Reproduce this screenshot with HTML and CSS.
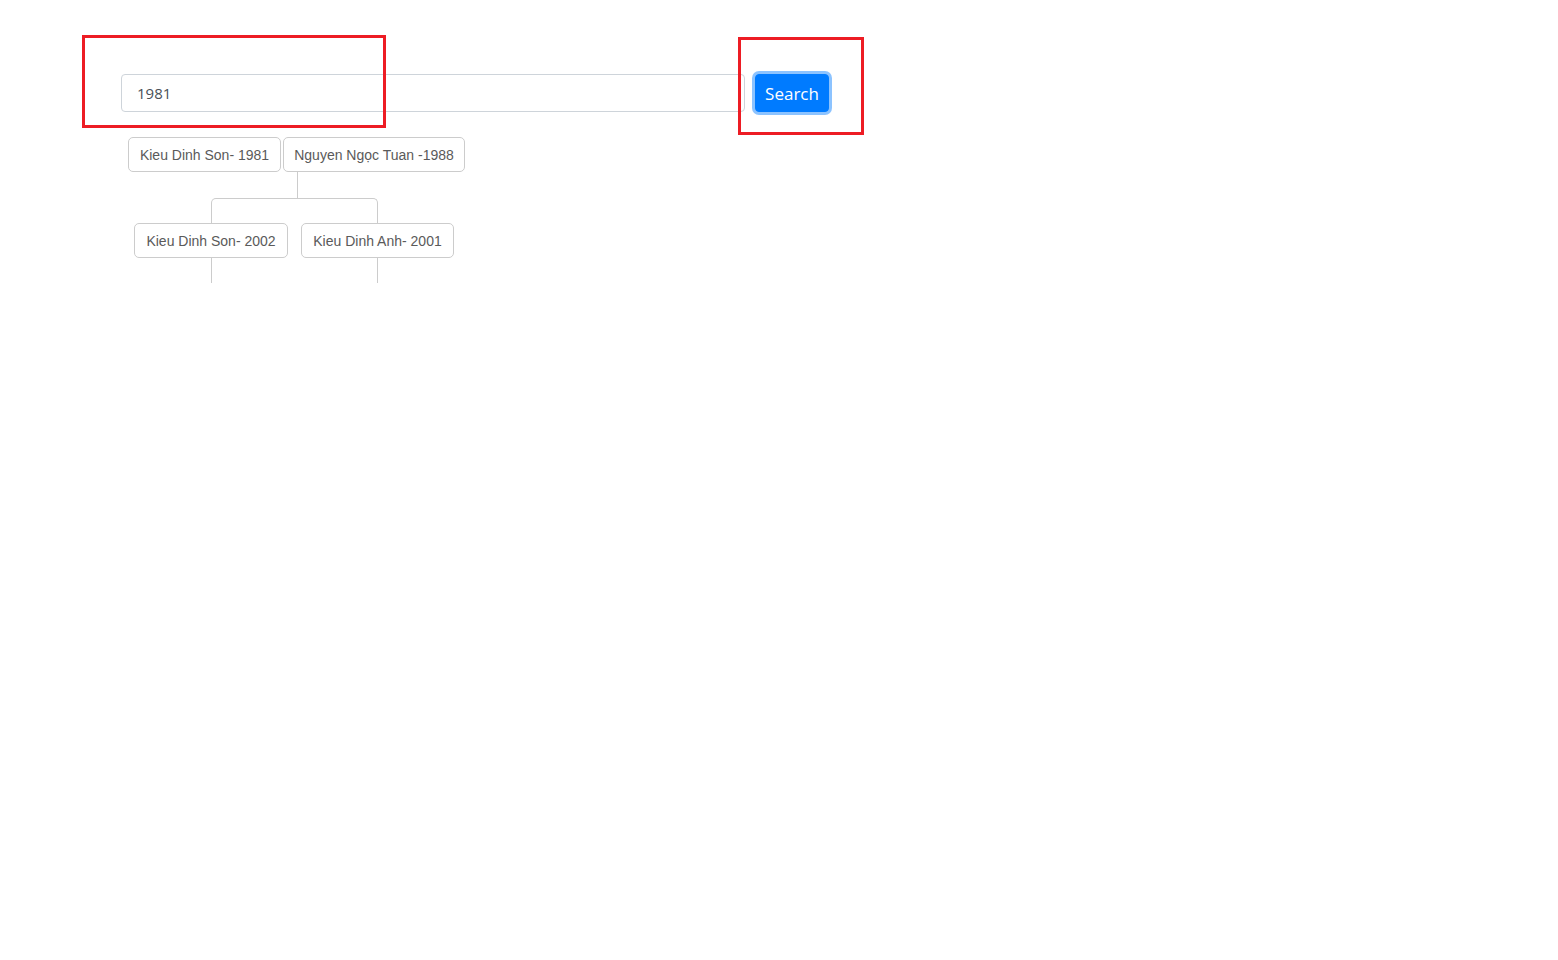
FILE: index.html
```
<!DOCTYPE html>
<html lang="vi">
<head>
<meta charset="utf-8">
<title>Family Tree Search</title>
<link rel="stylesheet" href="styles.css">
</head>
<body>
<div class="page">
  <form class="search-row">
    <input class="search-input" type="text" value="1981">
    <button class="search-btn" type="button">Search</button>
  </form>

  <div class="tree">
    <div class="couple">
      <div class="node node-a">Kieu Dinh Son- 1981</div>
      <div class="node node-b">Nguyen Ngọc Tuan -1988</div>
    </div>
    <div class="stem"></div>
    <div class="branch"></div>
    <div class="children">
      <div class="child">
        <div class="node node-c">Kieu Dinh Son- 2002</div>
        <div class="leg"></div>
      </div>
      <div class="child">
        <div class="node node-d">Kieu Dinh Anh- 2001</div>
        <div class="leg"></div>
      </div>
    </div>
  </div>
</div>

<div class="mark mark-input"></div>
<div class="mark mark-button"></div>
</body>
</html>
```

FILE: styles.css
```
html, body {
  margin: 0;
  padding: 0;
  background: #ffffff;
}

body {
  position: relative;
  min-height: 960px;
  font-family: "Open Sans", "Noto Sans", "Liberation Sans", sans-serif;
}

.page {
  padding: 74px 0 0 121px;
}

.search-row {
  display: flex;
  align-items: center;
  gap: 10px;
  margin: 0;
}

.search-input {
  box-sizing: border-box;
  width: 624px;
  height: 38px;
  padding: 0 15px;
  border: 1px solid #ced4da;
  border-radius: 4px;
  font-family: "Open Sans", "Noto Sans", sans-serif;
  font-size: 15px;
  color: #495057;
  background: #ffffff;
  outline: none;
}

.search-btn {
  box-sizing: border-box;
  width: 74px;
  height: 38px;
  padding: 0;
  border: 1px solid #007bff;
  border-radius: 4px;
  background: #007bff;
  color: #ffffff;
  font-family: "Open Sans", "Noto Sans", sans-serif;
  font-size: 17px;
  line-height: 1;
  box-shadow: 0 0 0 3px rgba(0, 123, 255, 0.45);
  cursor: pointer;
}

.tree {
  margin: 25px 0 0 7px;
}

.couple {
  display: flex;
  gap: 2px;
}

.node {
  box-sizing: border-box;
  height: 35px;
  display: flex;
  align-items: center;
  justify-content: center;
  border: 1px solid #cccccc;
  border-radius: 5px;
  font-family: "Liberation Sans", Arial, sans-serif;
  font-size: 14px;
  color: #5a5a5a;
  white-space: nowrap;
  background: #ffffff;
}

.node-a { width: 153px; }
.node-b { width: 182px; }
.node-c { width: 154px; }
.node-d { width: 153px; }

.stem {
  margin-left: 169px;
  width: 0;
  height: 26px;
  border-left: 1px solid #cccccc;
}

.branch {
  box-sizing: border-box;
  margin-left: 83px;
  width: 167px;
  height: 25px;
  border: 1px solid #cccccc;
  border-bottom: 0;
  border-radius: 5px 5px 0 0;
}

.children {
  display: flex;
  gap: 13px;
  margin-left: 6px;
}

.child {
  display: flex;
  flex-direction: column;
  align-items: center;
}

.leg {
  width: 0;
  height: 25px;
  border-left: 1px solid #cccccc;
}

.mark {
  position: absolute;
  box-sizing: border-box;
  border: 3px solid #ed1c24;
  pointer-events: none;
}

.mark-input {
  left: 82px;
  top: 35px;
  width: 304px;
  height: 93px;
}

.mark-button {
  left: 738px;
  top: 37px;
  width: 126px;
  height: 98px;
}
```
